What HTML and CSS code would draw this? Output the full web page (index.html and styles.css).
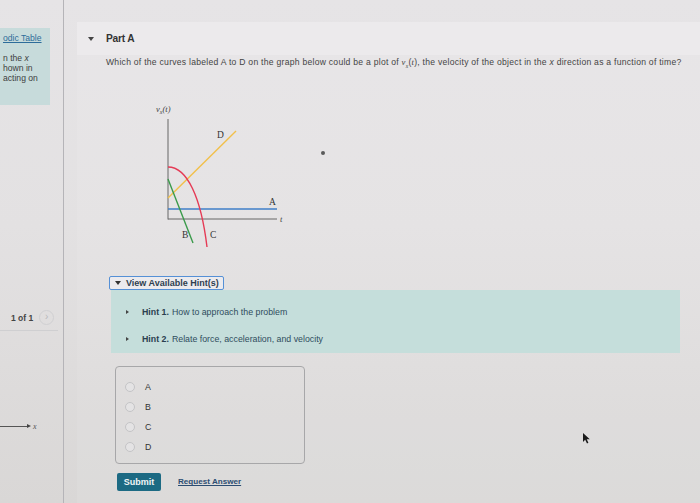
FILE: index.html
```html
<!DOCTYPE html>
<html>
<head>
<meta charset="utf-8">
<link rel="stylesheet" href="styles.css">
</head>
<body>
<div class="page">
  <aside class="side">
    <div class="intro">
      <a class="periodic" href="#">odic Table</a>
      <p>n the <i>x</i></p>
      <p>hown in</p>
      <p>acting on</p>
    </div>
    <div class="pager"><span class="count">1 of 1</span><span class="next">&#8250;</span></div>
    <div class="xarrow"><span class="shaft"></span><span class="head"></span><i>x</i></div>
  </aside>
  <main class="main">
    <section class="panel">
      <header class="part-head"><span class="caret-down"></span><span class="part-title">Part A</span></header>
      <div class="body">
        <p class="question">Which of the curves labeled A to D on the graph below could be a plot of <i class="math">v<sub>x</sub></i>(<i class="math">t</i>), the velocity of the object in the <i>x</i> direction as a function of time?</p>
        <svg class="graph" width="140" height="150" viewBox="0 0 140 150">
          <text x="7" y="10" class="lbl-small">v<tspan dy="2" font-size="6">x</tspan><tspan dy="-2">(t)</tspan></text>
          <line x1="19" y1="17" x2="19" y2="117.5" stroke="#666" stroke-width="1"/>
          <line x1="19" y1="117" x2="128" y2="117" stroke="#666" stroke-width="1"/>
          <text x="131" y="120" class="lbl-small">t</text>
          <line x1="19" y1="107" x2="128" y2="107" stroke="#3f7fc8" stroke-width="1.6"/>
          <line x1="19" y1="96" x2="87" y2="29" stroke="#f2c04a" stroke-width="1.4"/>
          <path d="M19,65 C38,65 52,95 58,145" fill="none" stroke="#e53a55" stroke-width="1.4"/>
          <line x1="19" y1="77" x2="44" y2="141" stroke="#3a9a4a" stroke-width="1.4"/>
          <text x="120" y="103" class="lbl">A</text>
          <text x="68" y="36" class="lbl">D</text>
          <text x="33" y="136" class="lbl">B</text>
          <text x="61" y="136" class="lbl">C</text>
        </svg>
        <button class="hint-toggle"><span class="caret-down small"></span>View Available Hint(s)</button>
        <div class="hints">
          <div class="hint"><span class="caret-right"></span><b>Hint 1.</b> How to approach the problem</div>
          <div class="hint"><span class="caret-right"></span><b>Hint 2.</b> Relate force, acceleration, and velocity</div>
        </div>
        <div class="choices">
          <label class="choice"><span class="radio"></span>A</label>
          <label class="choice"><span class="radio"></span>B</label>
          <label class="choice"><span class="radio"></span>C</label>
          <label class="choice"><span class="radio"></span>D</label>
        </div>
        <div class="actions">
          <button class="submit">Submit</button>
          <a class="request" href="#">Request Answer</a>
        </div>
      </div>
    </section>
  </main>
  <svg class="cursor" width="9" height="12" viewBox="0 0 9 12"><path d="M1,1 L1,10 L3.2,7.8 L5,11.5 L6.4,10.8 L4.7,7.2 L7.8,7.2 Z" fill="#1a1a1a"/></svg>
  <span class="speck"></span>
</div>
</body>
</html>
```
FILE: styles.css
```css
* { box-sizing: border-box; }
html, body { margin: 0; padding: 0; }
body {
  width: 700px;
  height: 503px;
  overflow: hidden;
  font-family: "Liberation Sans", Arial, Helvetica, sans-serif;
  color: #333;
  background: linear-gradient(180deg, #e6e4e6 0%, #e3e1e2 45%, #d9d7d6 100%);
}
.page {
  position: relative;
  display: flex;
  height: 503px;
}
.side {
  width: 64px;
  flex: none;
  border-right: 1px solid #b5b4b8;
  padding-top: 28px;
}
.intro {
  width: 50px;
  height: 77px;
  background: #c7dbdb;
  padding: 5px 0 0 3px;
  font-size: 8.6px;
  line-height: 10px;
  color: #3d3d3d;
}
.periodic {
  display: block;
  color: #2d6c9a;
  text-decoration: underline;
  margin-bottom: 10px;
}
.intro p { margin: 0; }
.pager {
  margin-top: 205px;
  height: 21px;
  display: flex;
  align-items: flex-start;
  border-bottom: 1px solid #cfcfd1;
  width: 58px;
  font-size: 8.5px;
  color: #444;
}
.count { margin: 3px 0 0 11px; font-weight: bold; }
.next {
  margin-left: 6px;
  width: 15px;
  height: 15px;
  border: 1px solid #d0d0d2;
  border-radius: 50%;
  color: #b9b9bb;
  font-size: 10px;
  line-height: 12px;
  text-align: center;
}
.xarrow {
  margin-top: 90px;
  height: 10px;
  display: flex;
  align-items: center;
}
.shaft { width: 27px; height: 1px; background: #555; }
.head {
  width: 0; height: 0;
  border-top: 2.5px solid transparent;
  border-bottom: 2.5px solid transparent;
  border-left: 4px solid #444;
}
.xarrow i { font-family: "Liberation Serif", serif; font-size: 8px; margin-left: 2px; color: #555; }

.main {
  flex: 1;
  padding: 22px 0 0 13px;
}
.panel {
  height: 100%;
  background: rgba(255,255,255,0.08);
}
.part-head {
  height: 33px;
  background: #eceaec;
  display: flex;
  align-items: center;
  padding-left: 11px;
}
.caret-down {
  width: 0; height: 0;
  border-left: 3px solid transparent;
  border-right: 3px solid transparent;
  border-top: 4px solid #444;
}
.part-title {
  margin-left: 12px;
  font-size: 10.2px;
  color: #333;
  font-weight: bold;
  letter-spacing: -0.2px;
}
.body { padding-left: 29px; }
.question {
  margin: 0;
  padding-top: 2px;
  font-size: 8.6px;
  letter-spacing: 0.26px;
  line-height: 10px;
  color: #444;
  white-space: nowrap;
}
.question .math { font-family: "Liberation Serif", serif; }
.question sub { font-size: 5.5px; }
.graph {
  display: block;
  margin: 31px 0 0 43px;
}
.lbl { font-family: "Liberation Serif", serif; font-size: 9.5px; fill: #333; }
.lbl-small { font-family: "Liberation Serif", serif; font-size: 8.5px; font-style: italic; fill: #444; }
.hint-toggle {
  display: flex;
  align-items: center;
  margin: 24px 0 0 3px;
  height: 14px;
  width: 115px;
  padding: 0 0 0 5px;
  border: 1.5px solid #5590d6;
  border-radius: 2px;
  background: #ecebee;
  font-family: inherit;
  font-size: 9px;
  font-weight: bold;
  color: #2f3f4f;
  white-space: nowrap;
}
.caret-down.small { margin-right: 5px; border-top-color: #333; }
.hints {
  margin-left: 5px;
  width: 569px;
  height: 63px;
  background: #c5dedb;
  padding-top: 17px;
}
.hint {
  display: flex;
  align-items: center;
  height: 10px;
  margin-bottom: 17px;
  padding-left: 15px;
  font-size: 8.8px;
  color: #2f4d5d;
}
.hint b { margin-right: 3px; color: #2a3f4f; }
.caret-right {
  width: 0; height: 0;
  border-top: 2.5px solid transparent;
  border-bottom: 2.5px solid transparent;
  border-left: 3px solid #444;
  margin-right: 13px;
}
.choices {
  margin: 13px 0 0 9px;
  width: 190px;
  height: 98px;
  border: 1px solid #a7a7a9;
  border-radius: 4px;
  padding-top: 10px;
}
.choice {
  display: flex;
  align-items: center;
  height: 20px;
  padding-left: 9px;
  font-size: 8.8px;
  color: #333;
}
.radio {
  width: 10px;
  height: 10px;
  border: 1px solid #c4c4c6;
  border-radius: 50%;
  background: #e4e3e4;
  margin-right: 10px;
}
.actions {
  margin: 9px 0 0 11px;
  display: flex;
  align-items: center;
}
.submit {
  width: 44px;
  height: 18px;
  border: none;
  border-radius: 2px;
  background: #1c6a83;
  color: #f2f5f6;
  font-family: inherit;
  font-size: 9px;
  font-weight: bold;
  padding: 0;
}
.request {
  margin-left: 17px;
  font-size: 8.1px;
  font-weight: bold;
  color: #2c4d72;
  text-decoration: underline;
}
.cursor {
  position: absolute;
  left: 582px;
  top: 432px;
}
.speck {
  position: absolute;
  left: 321px;
  top: 151px;
  width: 4px;
  height: 4px;
  border-radius: 50%;
  background: #5a5a5a;
}
```
